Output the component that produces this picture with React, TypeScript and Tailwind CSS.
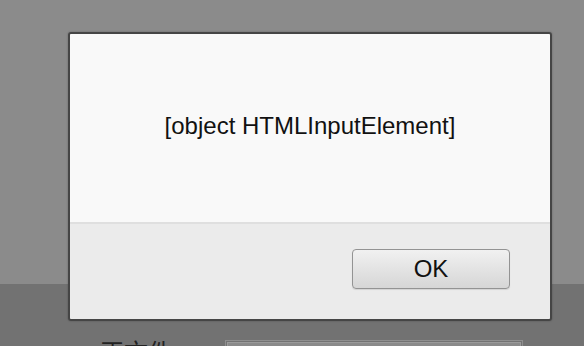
export default function App() {
  return (
    <div className="relative w-[584px] h-[346px] overflow-hidden font-['Liberation_Sans',Arial,sans-serif]">
      <div className="flex flex-col h-full">
        <div className="h-[284px] shrink-0 bg-[#8b8b8b]" />
        <div className="flex-1 bg-[#727272] flex items-start pt-[56px] pl-[100px] gap-[30px]">
          <span className="text-[24px] leading-none text-[#222] font-['Noto_Sans_CJK_SC',sans-serif] -mt-[1px]">
            正文件
          </span>
          <div className="ml-auto mr-[61px] w-[298px] h-[20px] shrink-0 border border-[#8e8e8e] p-[1px]">
            <div className="h-full border border-[#9a9a9a] bg-[#8a8a8a]" />
          </div>
        </div>
      </div>

      <div className="absolute left-[68px] top-[32px] w-[484px] h-[289px] border-2 border-[#454545] rounded-[3px] flex flex-col overflow-hidden shadow-[0_0_2px_rgba(0,0,0,0.3)]">
        <div className="h-[190px] shrink-0 bg-[#f9f9f9] flex items-center justify-center border-b-2 border-[#dfdfdf]">
          <p className="text-[24px] leading-none text-[#111] -mt-[4px]">[object HTMLInputElement]</p>
        </div>
        <div className="flex-1 bg-[#ebebeb] flex justify-end items-start pt-[25px] pr-[40px]">
          <button className="w-[158px] h-[40px] rounded-[4px] border border-[#939393] bg-gradient-to-b from-[#f1f1f1] to-[#d6d6d6] text-[24px] leading-none text-[#111] shadow-[0_1px_1px_rgba(0,0,0,0.1)]">
            OK
          </button>
        </div>
      </div>
    </div>
  );
}
